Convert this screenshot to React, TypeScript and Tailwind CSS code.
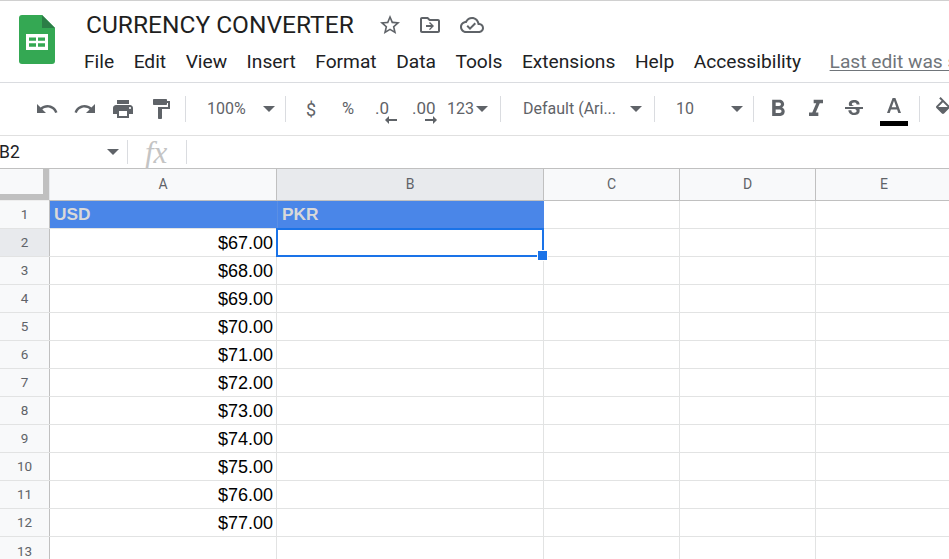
import React from "react";

const P = ({ d, size = 24, cls = "" }: { d: string; size?: number; cls?: string }) => (
  <svg width={size} height={size} viewBox="0 0 24 24" className={"shrink-0 fill-[#5f6368] " + cls}>
    <path d={d} />
  </svg>
);

const Caret = ({ cls = "" }: { cls?: string }) => (
  <svg width="12" height="6" viewBox="0 0 12 6" className={"shrink-0 fill-[#5f6368] " + cls}>
    <path d="M0 0h12L6 6z" />
  </svg>
);

const Sep = ({ cls = "" }: { cls?: string }) => <div className={"w-px h-[26px] bg-[#dadce0] shrink-0 " + cls} />;

const menus = ["File", "Edit", "View", "Insert", "Format", "Data", "Tools", "Extensions", "Help", "Accessibility"];

const rows = ["$67.00", "$68.00", "$69.00", "$70.00", "$71.00", "$72.00", "$73.00", "$74.00", "$75.00", "$76.00", "$77.00"];
const gridCols = "grid grid-cols-[50px_227px_267px_136px_136px_136px]";

export default function App() {
  return (
    <div className="w-[949px] h-[559px] overflow-hidden bg-white font-['Roboto',sans-serif] border-t border-[#d0d0d0]">
      {/* Title bar */}
      <div className="h-[82px] flex border-b border-[#dadce0]">
        <div className="w-[84px] shrink-0 pl-[19px] pt-[14px]">
          <svg width="36" height="49" viewBox="0 0 36 49">
            <path d="M3 0h20l13 13v33a3 3 0 0 1-3 3H3a3 3 0 0 1-3-3V3a3 3 0 0 1 3-3z" fill="#34a853" />
            <path d="M23 0l13 13H23z" fill="#2b7d46" />
            <path d="M7 19h22v16H7z" fill="#fff" />
            <path d="M10 22.5h7v3.2h-7zM19 22.5h7v3.2h-7zM10 28.3h7v3.4h-7zM19 28.3h7v3.4h-7z" fill="#34a853" />
          </svg>
        </div>
        <div className="flex-1 min-w-0">
          <div className="h-[39px] flex items-center pt-[8px] pl-[2px]">
            <span className="text-[24.5px] leading-[28px] text-[#1f1f1f] whitespace-nowrap">CURRENCY CONVERTER</span>
            <P cls="ml-[24px]" d="M22 9.24l-7.19-.62L12 2 9.19 8.63 2 9.24l5.46 4.73L5.82 21 12 17.27 18.18 21l-1.63-7.03L22 9.24zM12 15.4l-3.76 2.27 1-4.28-3.32-2.88 4.38-.38L12 6.1l1.71 4.04 4.38.38-3.32 2.88 1 4.28L12 15.4z" />
            <P cls="ml-[16px]" d="M20 6h-8l-2-2H4c-1.1 0-2 .9-2 2v12c0 1.1.9 2 2 2h16c1.1 0 2-.9 2-2V8c0-1.1-.9-2-2-2zm0 12H4V6h5.17l2 2H20v10zm-8-1l4-4-4-4-1.06 1.06L13.13 12H8v2h5.13l-2.19 2.19z" />
            <P cls="ml-[18px]" d="M19.35 10.04C18.67 6.59 15.64 4 12 4 9.11 4 6.6 5.64 5.35 8.04 2.34 8.36 0 10.91 0 14c0 3.31 2.69 6 6 6h13c2.76 0 5-2.24 5-5 0-2.64-2.05-4.78-4.65-4.96zM19 18H6c-2.21 0-4-1.79-4-4 0-2.05 1.53-3.76 3.56-3.97l1.07-.11.5-.95C8.08 7.14 9.94 6 12 6c2.62 0 4.88 1.86 5.39 4.43l.3 1.5 1.53.11c1.56.1 2.78 1.41 2.78 2.96 0 1.65-1.35 3-3 3zm-9-3.82l-2.09-2.09L6.5 13.5 10 17l6.01-6.01-1.41-1.41z" />
          </div>
          <div className="flex items-center gap-[19.5px] h-[42px] pt-[2px] whitespace-nowrap text-[19.2px] text-[#202124]">
            {menus.map((m) => (
              <span key={m} className="shrink-0">{m}</span>
            ))}
            <span className="ml-[9px] shrink-0 text-[#70757a] underline underline-offset-2">Last edit was seconds ago</span>
          </div>
        </div>
      </div>

      {/* Toolbar */}
      <div className="h-[53px] flex items-center pl-[35px] border-b border-[#e0e0e0] text-[#5f6368] text-[16px] whitespace-nowrap">
        <P d="M12.5 8c-2.65 0-5.05.99-6.9 2.6L2 7v9h9l-3.62-3.62c1.39-1.16 3.16-1.88 5.12-1.88 3.54 0 6.55 2.31 7.6 5.5l2.37-.78C21.08 11.03 17.15 8 12.5 8z" />
        <P cls="ml-[14px]" d="M18.4 10.6C16.55 8.99 14.15 8 11.5 8c-4.65 0-8.58 3.03-9.96 7.22L3.9 16c1.05-3.19 4.05-5.5 7.6-5.5 1.95 0 3.73.72 5.12 1.88L13 16h9V7l-3.6 3.6z" />
        <P cls="ml-[14px]" d="M19 8H5c-1.66 0-3 1.34-3 3v6h4v4h12v-4h4v-6c0-1.66-1.34-3-3-3zm-3 11H8v-5h8v5zm3-7c-.55 0-1-.45-1-1s.45-1 1-1 1 .45 1 1-.45 1-1 1zm-1-9H6v4h12V3z" />
        <P cls="ml-[14px]" d="M18 4V3c0-.55-.45-1-1-1H5c-.55 0-1 .45-1 1v4c0 .55.45 1 1 1h12c.55 0 1-.45 1-1V6h1v4H9v11c0 .55.45 1 1 1h2c.55 0 1-.45 1-1v-9h8V4h-3z" />
        <Sep cls="ml-[12px]" />
        <span className="ml-[21px] w-[39px] shrink-0">100%</span>
        <Caret cls="ml-[17px]" />
        <Sep cls="ml-[10px]" />
        <span className="ml-[20px] w-[10px] shrink-0 text-[18px]">$</span>
        <span className="ml-[26px] w-[14px] shrink-0 text-[16.5px]">%</span>
        <span className="ml-[19px] relative w-[20px] shrink-0 text-[17px]">
          .0
          <svg width="12" height="8" viewBox="0 0 12 8" className="absolute left-[10px] top-[20px] fill-[#5f6368]"><path d="M12 3H4V0L0 4l4 4V5h8z" /></svg>
        </span>
        <span className="ml-[17px] relative w-[25px] shrink-0 text-[17px]">
          .00
          <svg width="12" height="8" viewBox="0 0 12 8" className="absolute left-[13px] top-[20px] fill-[#5f6368]"><path d="M0 3h8V0l4 4-4 4V5H0z" /></svg>
        </span>
        <span className="ml-[10px] w-[27px] shrink-0">123</span>
        <Caret cls="ml-[2px]" />
        <Sep cls="ml-[12px]" />
        <span className="ml-[22px] w-[95px] shrink-0">Default (Ari...</span>
        <Caret cls="ml-[12px]" />
        <Sep cls="ml-[12px]" />
        <span className="ml-[21px] w-[20px] shrink-0">10</span>
        <Caret cls="ml-[35px]" />
        <Sep cls="ml-[10px]" />
        <P size={28} cls="ml-[10px]" d="M15.6 10.79c.97-.67 1.65-1.77 1.65-2.79 0-2.26-1.75-4-4-4H7v14h7.04c2.09 0 3.71-1.7 3.71-3.79 0-1.52-.86-2.82-2.15-3.42zM10 6.5h3c.83 0 1.5.67 1.5 1.5s-.67 1.5-1.5 1.5h-3v-3zm3.5 9H10v-3h3.5c.83 0 1.5.67 1.5 1.5s-.67 1.5-1.5 1.5z" />
        <P size={28} cls="ml-[10px]" d="M10 4v3h2.21l-3.42 8H6v3h8v-3h-2.21l3.42-8H18V4z" />
        <P cls="ml-[12px]" d="M6.85 7.08C6.85 4.37 9.45 3 12.24 3c1.64 0 3 .49 3.9 1.28.77.65 1.46 1.73 1.46 3.24h-3.01c0-.31-.05-.59-.15-.85-.29-.86-1.2-1.28-2.25-1.28-1.86 0-2.34 1.02-2.34 1.7 0 .48.25.88.74 1.21.38.25.77.48 1.41.7H7.39c-.21-.34-.54-.89-.54-1.92zM21 12v-2H3v2h9.62c1.15.45 1.96.75 1.96 1.97 0 1-.81 1.67-2.28 1.67-1.54 0-2.93-.54-2.93-2.51H6.4c0 .55.08 1.13.24 1.58.81 2.29 3.22 3.33 5.67 3.33 2.46 0 5.3-1.09 5.3-4.05 0-.28-.01-1.1-.01-1.99H21z" />
        <div className="ml-[14px] w-[28px] pt-[4px] flex flex-col items-center shrink-0">
          <svg width="20" height="20" viewBox="0 0 20 20" className="fill-[#5f6368]"><path d="M8.6 2h2.8L17 17h-2.7l-1.2-3.4H6.9L5.7 17H3zM7.7 11.3h4.6L10 4.8z" /></svg>
          <div className="w-[28px] h-[5px] bg-black mt-[5px]" />
        </div>
        <Sep cls="ml-[11px]" />
        <P cls="ml-[13px]" d="M16.56 8.94L7.62 0 6.21 1.41l2.38 2.38-5.15 5.15c-.59.59-.59 1.54 0 2.12l5.5 5.5c.29.29.68.44 1.06.44s.77-.15 1.06-.44l5.5-5.5c.59-.58.59-1.53 0-2.12zM5.21 10L10 5.21 14.79 10H5.21zM19 11.5s-2 2.17-2 3.5c0 1.1.9 2 2 2s2-.9 2-2c0-1.33-2-3.5-2-3.5z" />
      </div>

      {/* Formula bar */}
      <div className="h-[33px] flex items-center border-b border-[#c0c0c0]">
        <span className="w-[107px] -ml-px mr-px text-[17.5px] text-[#202124] shrink-0">B2</span>
        <Caret />
        <div className="w-px h-[24px] bg-[#dadce0] ml-[8px]" />
        <span className="ml-[17px] w-[24px] text-[31px] leading-none italic font-['Liberation_Serif',serif] text-[#c4c4c4]">fx</span>
        <div className="w-px h-[24px] bg-[#dadce0] ml-[17px]" />
      </div>

      {/* Grid */}
      <div className="relative">
        <div className={gridCols + " h-[32px] border-b border-[#c0c0c0] text-[14px] text-[#5f6368]"}>
          <div className="bg-[#f8f9fa] border-r border-[#e8eaed] relative">
            <div className="absolute right-0 top-0 w-[6px] h-full bg-[#c0c0c0]" />
            <div className="absolute left-0 bottom-0 h-[6px] w-full bg-[#c0c0c0]" />
            <div className="absolute left-0 bottom-[-1px] h-px w-full bg-[#eeeeee]" />
          </div>
          <div className="bg-[#f8f9fa] border-r border-[#c0c0c0] flex items-center justify-center">A</div>
          <div className="bg-[#e8eaed] border-r border-[#c0c0c0] flex items-center justify-center">B</div>
          <div className="bg-[#f8f9fa] border-r border-[#c0c0c0] flex items-center justify-center">C</div>
          <div className="bg-[#f8f9fa] border-r border-[#c0c0c0] flex items-center justify-center">D</div>
          <div className="bg-[#f8f9fa] flex items-center justify-center">E</div>
        </div>

        <div className={gridCols + " h-[28px] border-b border-[#e2e3e3]"}>
          <div className="bg-[#f8f9fa] border-r border-[#c0c0c0] flex items-center justify-center text-[13.5px] text-[#5f6368]">1</div>
          <div className="bg-[#4a86e8] pl-[4px] flex items-center font-['Liberation_Sans',sans-serif] font-bold text-[17.3px] leading-none text-[#d9d9d9]">USD</div>
          <div className="bg-[#4a86e8] border-l border-[#5b8fe4] pl-[4px] flex items-center font-['Liberation_Sans',sans-serif] font-bold text-[17.3px] leading-none text-[#d9d9d9]">PKR</div>
          <div className="border-r border-[#e2e3e3]" />
          <div className="border-r border-[#e2e3e3]" />
          <div />
        </div>

        {rows.map((v, i) => (
          <div key={v} className={gridCols + " h-[28px] border-b border-[#e2e3e3]"}>
            <div className={(i === 0 ? "bg-[#e8eaed] " : "bg-[#f8f9fa] ") + "border-r border-[#c0c0c0] flex items-center justify-center text-[13.5px] text-[#5f6368]"}>{i + 2}</div>
            <div className="border-r border-[#e2e3e3] pr-[3px] flex items-center justify-end font-['Liberation_Sans',sans-serif] text-[18px] leading-none text-black">{v}</div>
            <div className="border-r border-[#e2e3e3]" />
            <div className="border-r border-[#e2e3e3]" />
            <div className="border-r border-[#e2e3e3]" />
            <div />
          </div>
        ))}

        <div className={gridCols + " h-[28px]"}>
          <div className="bg-[#f8f9fa] border-r border-[#c0c0c0] flex items-center justify-center text-[13.5px] text-[#5f6368]">13</div>
          <div className="border-r border-[#e2e3e3]" />
          <div className="border-r border-[#e2e3e3]" />
          <div className="border-r border-[#e2e3e3]" />
          <div className="border-r border-[#e2e3e3]" />
          <div />
        </div>

        {/* Selection */}
        <div className="absolute left-[276px] top-[59px] w-[268px] h-[29px] border-2 border-[#1a73e8] pointer-events-none">
          <div className="absolute right-[-6px] bottom-[-6px] w-[9px] h-[9px] bg-[#1a73e8] border border-white box-content" />
        </div>
      </div>
    </div>
  );
}
